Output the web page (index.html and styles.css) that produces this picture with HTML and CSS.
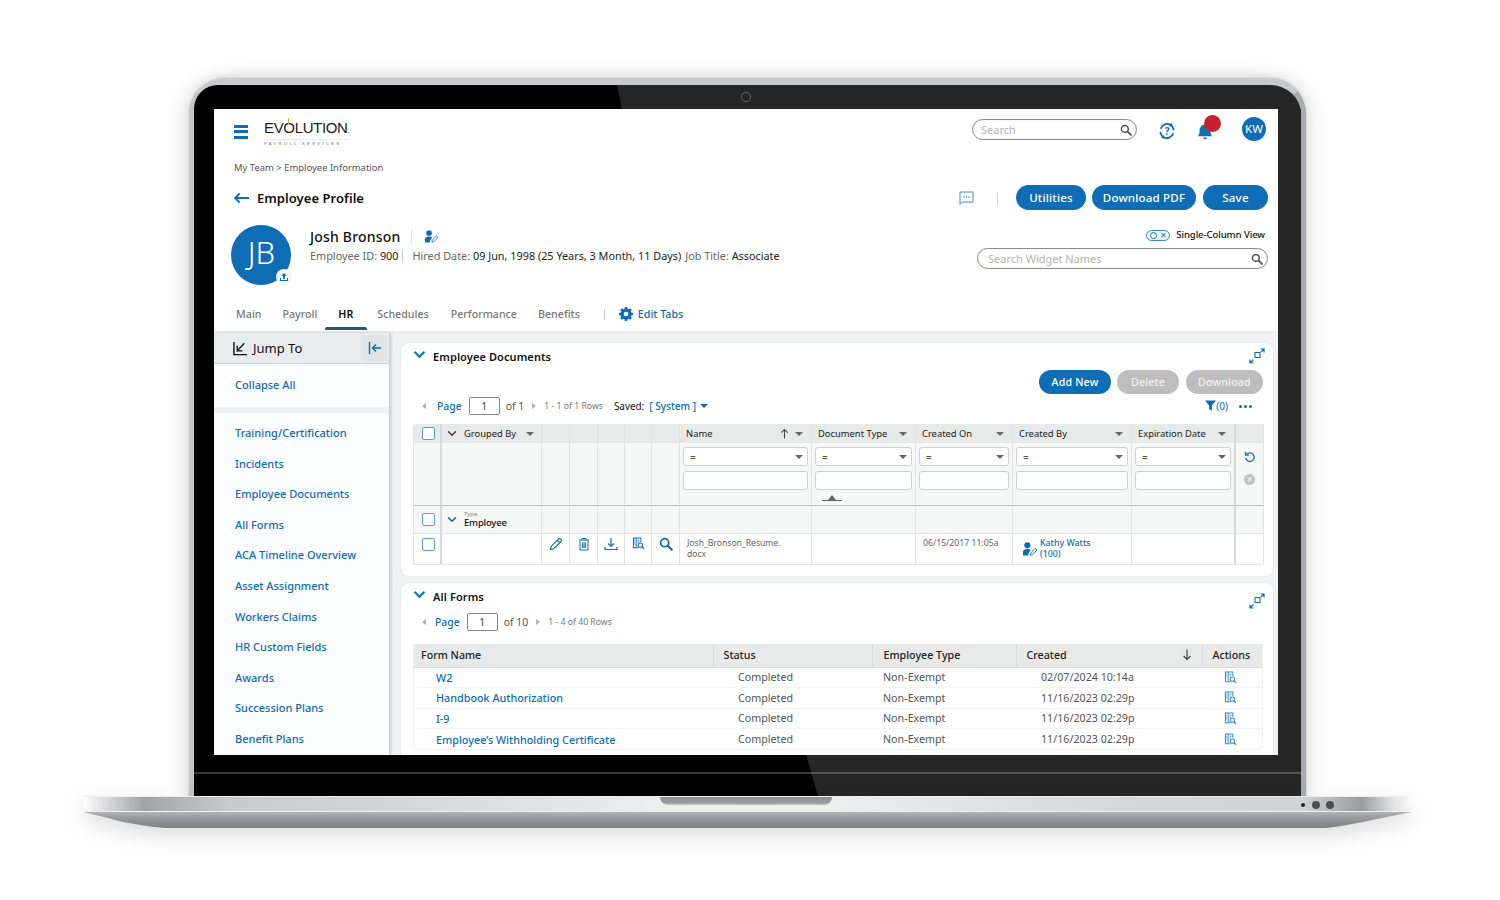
FILE: index.html
```html
<!DOCTYPE html>
<html lang="en">
<head>
<meta charset="utf-8">
<title>Employee Profile</title>
<link rel="stylesheet" href="styles.css">
</head>
<body>
<svg class="defs" width="0" height="0" aria-hidden="true">
  <symbol id="mag" viewBox="0 0 16 16"><circle cx="6.5" cy="6.5" r="4.6" fill="none" stroke="currentColor" stroke-width="2"/><path d="M10 10l4.6 4.6" stroke="currentColor" stroke-width="2.4" stroke-linecap="round"/></symbol>
  <symbol id="person" viewBox="0 0 18 16"><circle cx="6" cy="3.800" r="3.500" fill="currentColor"/><path d="M1 15.500V11.500C1 9.200 3 8 6 8c1.600 0 3 .4 3.800 1.100L7.500 12.500 7 15.500z" fill="currentColor"/><path d="M9.500 15l.5-2.500 5-5.300 2 1.900-5 5.300z" fill="none" stroke="currentColor" stroke-width="1"/></symbol>
  <symbol id="docs" viewBox="0 0 14 14"><path d="M7 11.500H1.500V1h8v4.500" fill="none" stroke="currentColor" stroke-width="1.100"/><path d="M4.500 1v10.500" stroke="currentColor" stroke-width="1"/><path d="M6 3.500h2M6 5.500h1.500M2.500 3.500h1M2.500 5.500h1M2.500 7.500h1" stroke="currentColor" stroke-width="1"/><circle cx="9" cy="8.800" r="2.300" fill="none" stroke="currentColor" stroke-width="1.100"/><path d="M10.700 10.500l2.200 2.200" stroke="currentColor" stroke-width="1.400"/></symbol>
  <symbol id="expand" viewBox="0 0 16 16"><rect x="6" y="4.500" width="5" height="5" fill="none" stroke="currentColor" stroke-width="1.100"/><path d="M11.500 1h3.500v3.500M15 1l-3 3M1 11.500V15h3.500M1 15l3.500-3.500" fill="none" stroke="currentColor" stroke-width="1.200"/></symbol>
  <symbol id="chev" viewBox="0 0 14 10"><path d="M1.500 2l5.500 5.500L12.500 2" fill="none" stroke="currentColor" stroke-width="2.200"/></symbol>
  <symbol id="arrow" viewBox="0 0 10 12"><path d="M5 11.500V1.500M1.500 5L5 1.500 8.500 5" fill="none" stroke="currentColor" stroke-width="1.200"/></symbol>
</svg>
<div class="laptop">
  <section class="lid">
    <div class="glare-top"></div>
    <div class="glare-bottom"></div>
    <div class="hinge-line"></div>
    <div class="camera"></div>
    <div class="screen">
      <header class="page-head">
        <div class="topbar">
          <div class="burger"><i></i><i></i><i></i></div>
          <div class="logo">
            <div class="logo-word">EV<span class="logo-o">O<b></b></span>LUTION<small>.</small></div>
            <div class="logo-sub">PAYROLL SERVICES</div>
          </div>
          <div class="search search-top"><span>Search</span><svg class="mag"><use href="#mag"/></svg></div>
          <svg class="help" viewBox="0 0 20 20"><path d="M3 7.500A7.800 7.800 0 0 1 14 3M17 12.500A7.800 7.800 0 0 1 6 17M2.600 11A7.800 7.800 0 0 0 4.500 15.500M17.400 9A7.800 7.800 0 0 0 15.500 4.500" fill="none" stroke="#0f6db5" stroke-width="2"/><circle cx="14.500" cy="3.500" r="1.800" fill="#0f6db5"/><circle cx="5.500" cy="16.500" r="1.800" fill="#0f6db5"/><text x="10" y="14" text-anchor="middle" class="help-q">?</text></svg>
          <div class="bell">
            <svg viewBox="0 0 16 18"><path d="M0.500 14.200c1.300-1 2-2.200 2-4.700C2.500 5.400 4.600 2.600 8 2.600s5.500 2.800 5.500 6.900c0 2.500.7 3.700 2 4.700z" fill="#0f6db5"/><path d="M6 15.500h4l-.7 1.500H6.700z" fill="#0f6db5"/></svg>
            <i></i>
          </div>
          <div class="kw">KW</div>
        </div>
        <div class="crumbs">My Team &gt; Employee Information</div>
        <div class="title-row">
          <svg class="back" viewBox="0 0 16 12"><path d="M6 1L1.200 6 6 11M1.500 6H16" fill="none" stroke="#0f6db5" stroke-width="2"/></svg>
          <h1>Employee Profile</h1>
          <svg class="chat" viewBox="0 0 15 15"><path d="M1 1h13v10H3.500L1 13.500z" fill="none" stroke="#3f86c6" stroke-width="1"/><path d="M4.500 6h1.200M7 6h1.200M9.500 6h1.200" stroke="#3f86c6" stroke-width="1.300"/></svg>
          <span class="vsep"></span>
          <button class="btn btn-utilities">Utilities</button>
          <button class="btn btn-pdf">Download PDF</button>
          <button class="btn btn-save">Save</button>
        </div>
        <div class="profile">
          <div class="avatar">JB
            <span class="upload"><svg viewBox="0 0 10 10"><path d="M5 1L2.500 3.800h1.600V7h1.800V3.800h1.600z M1 6v3h8V6H8v2H2V6z" fill="#0f6db5"/></svg></span>
          </div>
          <div class="who">
            <div class="name-row"><span class="name">Josh Bronson</span><span class="name-sep"></span><svg class="person-lg"><use href="#person"/></svg></div>
            <div class="meta"><span class="k">Employee ID:</span> 900<span class="meta-sep"></span><span class="k">Hired Date:</span> 09 Jun, 1998 (25 Years, 3 Month, 11 Days)<span class="gap"></span><span class="k">Job Title:</span> Associate</div>
          </div>
          <div class="view-tools">
            <div class="toggle-row">
              <span class="toggle"><i></i><b>×</b></span>
              <span>Single-Column View</span>
            </div>
            <div class="search search-widget"><span>Search Widget Names</span><svg class="mag"><use href="#mag"/></svg></div>
          </div>
        </div>
        <nav class="tabs">
          <a class="tab t-main">Main</a>
          <a class="tab t-pay">Payroll</a>
          <a class="tab tab-on t-hr">HR</a>
          <a class="tab t-sch">Schedules</a>
          <a class="tab t-perf">Performance</a>
          <a class="tab t-ben">Benefits</a>
          <span class="tab-sep"></span>
          <svg class="gear" viewBox="0 0 16 16"><path fill="#0f6db5" fill-rule="evenodd" d="M6.700 0h2.600l.4 2.100 1.300.6L12.800 1.500l1.800 1.800-1.200 1.800.6 1.300 2 .4v2.600l-2 .4-.6 1.300 1.200 1.800-1.800 1.800-1.800-1.200-1.300.6-.4 2.100H6.700l-.4-2.100-1.300-.6-1.800 1.200-1.800-1.800 1.200-1.800-.6-1.300-2-.4V6.800l2-.4.6-1.300-1.200-1.800 1.800-1.800L5 2.700l1.300-.6zM8 5.300a2.700 2.700 0 1 0 0 5.400 2.700 2.700 0 0 0 0-5.400z"/></svg>
          <a class="edit-tabs">Edit Tabs</a>
        </nav>
      </header>
      <div class="workspace">
        <aside class="side">
          <div class="jump">
            <svg class="jump-ic" viewBox="0 0 16 16"><path d="M1 1v13.500h14" fill="none" stroke="#111" stroke-width="1.500"/><path d="M12 2.500L5 10M4.500 5v5.500H10" fill="none" stroke="#111" stroke-width="1.500"/></svg>
            <span class="jump-t">Jump To</span>
            <span class="jump-btn"><svg viewBox="0 0 14 14"><path d="M1.500 1v12" stroke="#0f6db5" stroke-width="1.400"/><path d="M8 3.500L4.500 7 8 10.500M5 7h8" fill="none" stroke="#0f6db5" stroke-width="1.400"/></svg></span>
          </div>
          <a class="side-link collapse">Collapse All</a>
          <div class="side-rule"></div>
          <ul class="side-list">
            <li>Training/Certification</li>
            <li>Incidents</li>
            <li>Employee Documents</li>
            <li>All Forms</li>
            <li>ACA Timeline Overview</li>
            <li>Asset Assignment</li>
            <li>Workers Claims</li>
            <li>HR Custom Fields</li>
            <li>Awards</li>
            <li>Succession Plans</li>
            <li>Benefit Plans</li>
          </ul>
        </aside>
        <main class="content">
          <section class="card card-docs">
            <div class="card-head">
              <svg class="chev"><use href="#chev"/></svg>
              <h2>Employee Documents</h2>
              <svg class="expand"><use href="#expand"/></svg>
            </div>
            <div class="doc-actions">
              <button class="btn btn-sm btn-add">Add New</button>
              <button class="btn btn-sm btn-off btn-del">Delete</button>
              <button class="btn btn-sm btn-off btn-dl">Download</button>
            </div>
            <div class="pager">
              <i class="tri-l"></i><span class="pg">Page</span><span class="pg-box">1</span><span class="of">of 1</span><i class="tri-r"></i><span class="rows">1 - 1 of 1 Rows</span>
              <span class="saved">Saved:</span><span class="system">[ System ]</span><i class="caret-blue"></i>
              <span class="filters"><svg viewBox="0 0 12 12"><path d="M0 .5h12L7.500 6v5.500l-3-1.500V6z" fill="#0f6db5"/></svg>(0)</span>
              <span class="dots"><i></i><i></i><i></i></span>
            </div>
            <div class="grid">
              <div class="c hd thick"><span class="cb"></span></div>
              <div class="c hd g-head"><svg class="chev-sm"><use href="#chev"/></svg><span>Grouped By</span><i class="caret"></i></div>
              <div class="c hd"></div><div class="c hd"></div><div class="c hd"></div><div class="c hd"></div><div class="c hd"></div>
              <div class="c hd lab"><span>Name</span><svg class="arrow-up"><use href="#arrow"/></svg><i class="caret"></i></div>
              <div class="c hd lab"><span>Document Type</span><i class="caret"></i></div>
              <div class="c hd lab"><span>Created On</span><i class="caret"></i></div>
              <div class="c hd lab"><span>Created By</span><i class="caret"></i></div>
              <div class="c hd lab thick"><span>Expiration Date</span><i class="caret"></i></div>
              <div class="c hd end"></div>

              <div class="c fl thick"></div><div class="c fl"></div>
              <div class="c fl"></div><div class="c fl"></div><div class="c fl"></div><div class="c fl"></div><div class="c fl"></div>
              <div class="c fl f"><span class="sel">=<i class="caret"></i></span><span class="inp"></span></div>
              <div class="c fl f mark"><span class="sel">=<i class="caret"></i></span><span class="inp"></span><span class="splitter"></span></div>
              <div class="c fl f"><span class="sel">=<i class="caret"></i></span><span class="inp"></span></div>
              <div class="c fl f"><span class="sel">=<i class="caret"></i></span><span class="inp"></span></div>
              <div class="c fl f thick"><span class="sel">=<i class="caret"></i></span><span class="inp"></span></div>
              <div class="c fl end tools">
                <svg viewBox="0 0 12 12"><path d="M2.500 3.500A4.300 4.300 0 1 1 1.700 7" fill="none" stroke="#0f6db5" stroke-width="1.300"/><path d="M1.500 .8v3.400h3.400" fill="none" stroke="#0f6db5" stroke-width="1.300"/></svg>
                <span class="clear">×</span>
              </div>

              <div class="c gr thick cc"><span class="cb"></span></div>
              <div class="c gr group"><svg class="chev-sm blue"><use href="#chev"/></svg><div><small>Type</small><b>Employee</b></div></div>
              <div class="c gr"></div><div class="c gr"></div><div class="c gr"></div><div class="c gr"></div><div class="c gr"></div>
              <div class="c gr"></div><div class="c gr"></div><div class="c gr"></div><div class="c gr"></div><div class="c gr thick"></div><div class="c gr end"></div>

              <div class="c rw thick cc"><span class="cb"></span></div>
              <div class="c rw"></div>
              <div class="c rw act"><svg viewBox="0 0 14 14"><path d="M1.500 12.500l.8-3.300L9.500 2a1.400 1.400 0 0 1 2 0l.5.5a1.400 1.400 0 0 1 0 2l-7.200 7.200z M8.300 3.300l2.400 2.400" fill="none" stroke="#0f6db5" stroke-width="1.100"/></svg></div>
              <div class="c rw act"><svg viewBox="0 0 14 14"><path d="M2 3h10M5 3V1.500h4V3M3 3.500V13h8V3.500M5.500 5.500V11M7 5.500V11M8.500 5.500V11" fill="none" stroke="#0f6db5" stroke-width="1"/></svg></div>
              <div class="c rw act"><svg viewBox="0 0 14 14"><path d="M7 1v8M4 6.500L7 9.500l3-3M1 10v2.500h12V10" fill="none" stroke="#0f6db5" stroke-width="1.200"/></svg></div>
              <div class="c rw act"><svg class="doc-ic"><use href="#docs"/></svg></div>
              <div class="c rw act"><svg class="doc-mag"><use href="#mag"/></svg></div>
              <div class="c rw cell-name">Josh_Bronson_Resume.<br>docx</div>
              <div class="c rw"></div>
              <div class="c rw cell-date">06/15/2017 11:05a</div>
              <div class="c rw cell-by"><svg class="person-sm"><use href="#person"/></svg><a>Kathy Watts<br>(100)</a></div>
              <div class="c rw thick"></div>
              <div class="c rw end"></div>
            </div>
          </section>
          <section class="card card-forms">
            <div class="card-head">
              <svg class="chev"><use href="#chev"/></svg>
              <h2>All Forms</h2>
              <svg class="expand"><use href="#expand"/></svg>
            </div>
            <div class="pager pager-forms">
              <i class="tri-l"></i><span class="pg">Page</span><span class="pg-box">1</span><span class="of">of 10</span><i class="tri-r"></i><span class="rows">1 - 4 of 40 Rows</span>
            </div>
            <div class="forms-wrap">
            <table class="forms">
              <thead>
                <tr><th class="col-a">Form Name</th><th class="col-b">Status</th><th class="col-c">Employee Type</th><th class="col-d"><div class="th-sort">Created<svg class="arrow-down"><use href="#arrow"/></svg></div></th><th class="col-e">Actions</th></tr>
              </thead>
              <tbody>
                <tr><td class="form-link">W2</td><td>Completed</td><td>Non-Exempt</td><td>02/07/2024 10:14a</td><td class="form-act"><svg><use href="#docs"/></svg></td></tr>
                <tr><td class="form-link">Handbook Authorization</td><td>Completed</td><td>Non-Exempt</td><td>11/16/2023 02:29p</td><td class="form-act"><svg><use href="#docs"/></svg></td></tr>
                <tr><td class="form-link">I-9</td><td>Completed</td><td>Non-Exempt</td><td>11/16/2023 02:29p</td><td class="form-act"><svg><use href="#docs"/></svg></td></tr>
                <tr><td class="form-link">Employee’s Withholding Certificate</td><td>Completed</td><td>Non-Exempt</td><td>11/16/2023 02:29p</td><td class="form-act"><svg><use href="#docs"/></svg></td></tr>
              </tbody>
            </table>
            </div>
          </section>
        </main>
      </div>
    </div>
  </section>
  <section class="base">
    <div class="plate">
      <span class="notch"></span>
      <span class="ports"><i></i><i></i><i></i></span>
    </div>
    <div class="under"></div>
  </section>
</div>
</body>
</html>
```

FILE: styles.css
```css
* { box-sizing: border-box; }
html, body { margin: 0; padding: 0; }
body { width: 1500px; height: 900px; overflow: hidden; background: #fff; font-family: "Noto Sans", "Open Sans", sans-serif; color: #222; font-size: 11px; }
.defs { position: absolute; }
button { font-family: inherit; border: 0; padding: 0; }
ul { list-style: none; margin: 0; padding: 0; }
h1, h2 { margin: 0; }

/* device */
.laptop { width: 1500px; padding-top: 78px; display: flex; flex-direction: column; align-items: center; }
.lid { position: relative; width: 1117px; height: 718px; margin-left: -5px; background: #262626; border-style: solid; border-width: 7px 5px 0; border-color: #c9cacc #a9abae #a9abae #c4c5c7; border-radius: 36px 36px 0 0; padding: 24px 23px 0 20px; box-shadow: 0 0 1px 1px #d9d9d9, -6px 0 18px rgba(0,0,0,.10), 6px 0 18px rgba(0,0,0,.10); }
.glare-top { position: absolute; left: 0; top: 0; width: 428px; height: 24px; background: #000; border-radius: 31px 0 0 0; clip-path: polygon(0 0, 423px 0, 428px 100%, 0 100%); }
.lid::before { content: ""; position: absolute; left: 0; top: 24px; bottom: 0; width: 20px; background: #000; }
.lid::after { content: ""; position: absolute; left: 1084px; top: 24px; bottom: 0; width: 23px; background: #262626; }
.glare-bottom { position: absolute; left: 0; bottom: 0; width: 624px; height: 41px; background: #000; clip-path: polygon(0 0, 612px 0, 624px 100%, 0 100%); }
.hinge-line { position: absolute; left: 0; right: 0; bottom: 22px; height: 2px; background: rgba(255,255,255,.22); z-index: 1; }
.camera { position: absolute; left: 547px; top: 7px; width: 10px; height: 10px; border-radius: 50%; background: #222; border: 1.500px solid #666; }
.screen { position: relative; z-index: 2; width: 1064px; height: 646px; background: #fff; display: flex; flex-direction: column; overflow: hidden; }

.base { width: 1329px; margin-left: -5px; display: flex; flex-direction: column; align-items: flex-start; filter: drop-shadow(0 8px 10px rgba(0,0,0,.13)); }
.plate { position: relative; width: 1324px; height: 16px; margin-left: 1px; background: linear-gradient(90deg, #fff 0, #e8e8e8 1%, #a2a3a5 4.500%, #c9cacc 11%, #d6d7d9 25%, #eceded 43%, #eeefef 55%, #d6d7d9 78%, #d2d3d5 92%, #9a9b9d 96.500%, #e6e6e6 99%, #f4f4f4 100%); border-top: 1px solid #eee; border-bottom: 1px solid #eee; }
.notch { position: absolute; left: 576px; top: 0; width: 172px; height: 8px; background: linear-gradient(#8e8f91, #9a9b9d 70%, #c6c7c9); border-radius: 0 0 12px 12px; }
.ports { position: absolute; left: 1217px; top: 3px; display: flex; align-items: center; gap: 6px; height: 9px; }
.ports i { width: 8px; height: 8px; border-radius: 50%; background: #4c4d4f; }
.ports i:first-child { width: 4px; height: 4px; background: #222; margin-right: 1px; }
.under { width: 1329px; height: 16px; background: linear-gradient(#b3b4b6, #97989b 40%, #808184); clip-path: polygon(0 0, 100% 0, 98% 33%, 96.500% 60%, 94.500% 90%, 93.500% 100%, 6.200% 100%, 5% 90%, 3% 62%, 1.500% 30%); }

/* header */
.page-head { height: 222px; flex: none; padding: 0 10px 0 20px; display: flex; flex-direction: column; }
.topbar { height: 41px; display: flex; align-items: center; margin-right: 2px; }
.burger { width: 14px; margin-top: 4px; display: flex; flex-direction: column; gap: 2.500px; }
.burger i { height: 3px; background: #0f6db5; }
.logo { margin-left: 16px; width: 86px; margin-top: 8px; }
.logo-word { font: 400 15px/14px "Liberation Sans", sans-serif; letter-spacing: -0.35px; color: #1c1c1c; white-space: nowrap; }
.logo-word small { font-size: 8px; }
.logo-o { position: relative; }
.logo-o b { position: absolute; left: 5px; top: -1px; width: 1px; height: 6px; background: #a5c531; }
.logo-sub { font: 4px/5px "Liberation Sans", sans-serif; letter-spacing: 2.400px; color: #666; margin-top: 1px; border-top: 1px solid #e8eed0; padding-top: 1px; white-space: nowrap; }
.search { display: flex; align-items: center; justify-content: space-between; border: 1px solid #8d8d8d; border-radius: 11px; background: #fff; color: #b3b3b3; font-size: 11px; padding: 0 4px 0 8px; box-shadow: inset 0 0 1px #bbb; }
.search-top { margin-left: auto; width: 165px; height: 21px; }
.mag { width: 12px; height: 12px; color: #555; }
.help { width: 18px; height: 18px; margin-left: 21px; margin-top: 3px; }
.help-q { font: 700 11px "Noto Sans", sans-serif; fill: #0f6db5; }
.bell { position: relative; width: 16px; height: 18px; margin-left: 21px; margin-top: 3px; }
.bell svg { display: block; width: 16px; height: 18px; }
.bell i { position: absolute; left: 7px; top: -7px; width: 17px; height: 17px; border-radius: 50%; background: #c8202a; }
.kw { width: 24px; height: 24px; border-radius: 50%; margin-left: 29px; margin-top: -1px; background: #0f6db5; color: #fff; font-size: 11.500px; line-height: 24px; text-align: center; }
.crumbs { margin-top: 11px; font-size: 9.450px; line-height: 14px; color: #555; }
.title-row { display: flex; align-items: center; height: 26px; margin-top: 10px; }
.back { width: 15px; height: 12px; }
h1 { margin-left: 8px; font-size: 13px; font-weight: 600; letter-spacing: .05px; color: #111; }
.chat { width: 15px; height: 15px; margin-left: auto; }
.vsep { width: 1px; height: 13px; background: #d8d8d8; margin: 0 18px 0 23px; }
.btn { display: block; background: #0f6db5; color: #fff; border-radius: 13px; font-size: 11.500px; font-weight: 500; letter-spacing: .2px; height: 25px; }
.title-row .btn { margin-top: -2px; }
.btn-utilities { width: 70px; }
.btn-pdf { width: 104px; margin-left: 6px; }
.btn-save { width: 65px; margin-left: 7px; }
.profile { display: flex; align-items: flex-start; height: 59px; margin-top: 14px; margin-left: -3px; }
.avatar { position: relative; width: 60px; height: 60px; flex: none; border-radius: 50%; background: #0f6db5; color: #fff; font-size: 31px; font-weight: 300; line-height: 55px; text-align: center; padding-left: 1px; }
.upload { position: absolute; right: -1px; bottom: 0; width: 16px; height: 16px; border-radius: 50%; background: #f2f2f2; display: flex; align-items: center; justify-content: center; }
.upload svg { width: 10px; height: 10px; }
.who { margin-left: 19px; margin-top: 1px; }
.name-row { display: flex; align-items: center; height: 20px; }
.name { font-size: 14px; font-weight: 500; letter-spacing: .2px; color: #111; }
.name-sep { width: 1px; height: 13px; background: #ddd; margin: 0 12px 0 10px; }
.person-lg { width: 15px; height: 13px; color: #0f6db5; }
.meta { margin-top: 2px; font-size: 10.850px; line-height: 16px; color: #222; white-space: nowrap; }
.meta .k { color: #666; }
.meta-sep { display: inline-block; width: 1px; height: 12px; background: #ccc; margin: 0 10px 0 3px; vertical-align: -2px; }
.gap { display: inline-block; width: 4px; }
.view-tools { margin-left: auto; display: flex; flex-direction: column; align-items: flex-end; }
.toggle-row { display: flex; align-items: center; margin-top: 2px; margin-right: 3px; font-size: 9.580px; font-weight: 500; letter-spacing: -.1px; line-height: 16px; color: #111; }
.toggle { position: relative; display: block; width: 24px; height: 11px; margin-right: 6px; border: 1px solid #3f86c6; border-radius: 6px; background: #eaf2fa; }
.toggle i { position: absolute; left: 3px; top: 1px; width: 7px; height: 7px; border-radius: 50%; border: 1px solid #0f6db5; background: #fff; }
.toggle b { position: absolute; right: 3px; top: -3px; font-size: 10px; line-height: 14px; font-weight: 400; color: #0f6db5; }
.search-widget { width: 291px; height: 21px; margin-top: 5px; padding-left: 10px; color: #b3b3b3; }
.tabs { position: relative; display: flex; align-items: center; height: 20px; margin-top: 20px; margin-left: 2px; font-size: 10.680px; font-weight: 500; color: #777; }
.tab { display: block; position: relative; }
.t-pay { margin-left: 21px; }
.t-hr { margin-left: 21px; color: #111; font-weight: 600; }
.t-sch { margin-left: 24px; }
.t-perf { margin-left: 22px; }
.t-ben { margin-left: 21px; }
.tab-on::after { content: ""; position: absolute; left: -13px; right: -14px; bottom: -9px; height: 3px; background: #2a5a6d; border-radius: 2px 2px 0 0; }
.tab-sep { width: 1px; height: 11px; background: #ccc; margin: 0 14px 0 24px; }
.gear { width: 14px; height: 14px; }
.edit-tabs { margin-left: 5px; color: #0f6db5; }

/* workspace */
.workspace { flex: 1; display: flex; min-height: 0; background: #f1f2f3; border-top: 2px solid #eceded; }
.side { width: 175px; flex: none; background: #fbfcfe; box-shadow: 2px 0 3px rgba(0,0,0,.18); position: relative; z-index: 1; }
.jump { display: flex; align-items: center; height: 31px; background: #e9ecec; border-bottom: 1px solid #d0d2d2; }
.jump-ic { width: 15px; height: 15px; margin-left: 19px; }
.jump-t { margin-left: 5px; font-size: 13px; line-height: 16px; color: #111; }
.jump-btn { margin-left: auto; margin-right: 2px; width: 25px; height: 26px; background: #dfe4e6; display: flex; align-items: center; justify-content: center; }
.jump-btn svg { width: 14px; height: 14px; }
.side-link, .side-list li { color: #0f6db5; font-size: 11px; font-weight: 500; line-height: 16px; padding-left: 21px; }
.collapse { display: block; margin-top: 13px; }
.side-rule { height: 6px; margin-top: 14px; background: #f1f2f3; }
.side-list { margin-top: 12px; }
.side-list li { height: 30.600px; line-height: 16px; padding-top: 0; }
.content { flex: 1; min-width: 0; padding: 10px 5px 0 12px; overflow: hidden; display: flex; flex-direction: column; gap: 7px; }
.card { flex: none; background: #fff; border-radius: 8px; box-shadow: 0 0 2px rgba(0,0,0,.10); padding: 0 10px 0 12px; }
.card-docs { height: 233px; }
.card-forms { height: 200px; }
.card-head { position: relative; display: flex; align-items: center; height: 25px; padding-top: 1px; }
.chev { width: 13px; height: 9px; color: #0f6db5; margin-top: -3px; }
h2 { margin-left: 7px; font-size: 11px; font-weight: 600; letter-spacing: .1px; color: #111; }
.expand { width: 16px; height: 16px; color: #0f6db5; margin-left: auto; margin-right: -2px; margin-top: 0; }
.card-forms .expand { margin-top: 10px; }
.doc-actions { display: flex; justify-content: flex-end; height: 24px; margin-top: 2px; }
.btn-sm { font-size: 10.600px; height: 24px; border-radius: 12px; }
.btn-add { width: 72px; }
.btn-off { background: #bdbdbd; color: #f2f2f2; }
.btn-del { width: 62px; margin-left: 6px; }
.btn-dl { width: 77px; margin-left: 7px; }
.pager { display: flex; align-items: center; height: 18px; margin-top: 3px; padding-left: 9px; font-size: 11px; color: #555; }
.tri-l, .tri-r { width: 0; height: 0; border-top: 3px solid transparent; border-bottom: 3px solid transparent; }
.tri-l { border-right: 4px solid #b3b3b3; }
.tri-r { border-left: 4px solid #b3b3b3; margin-left: 8px; }
.pg { margin-left: 11px; color: #0f6db5; font-weight: 500; font-size: 10.400px; }
.pg-box { width: 31px; height: 18px; margin-left: 7px; border: 1px solid #888; border-radius: 2px; text-align: center; line-height: 16px; color: #444; font-size: 10.500px; }
.of { margin-left: 6px; font-size: 10.400px; }
.rows { margin-left: 8px; font-size: 8.700px; color: #777; }
.saved { margin-left: 11px; color: #111; font-size: 9.900px; }
.system { margin-left: 5px; color: #0f6db5; font-size: 10.100px; font-weight: 500; }
.caret-blue { width: 0; height: 0; margin-left: 4px; border-left: 4px solid transparent; border-right: 4px solid transparent; border-top: 4px solid #0f6db5; }
.filters { margin-left: auto; display: flex; align-items: center; color: #0f6db5; font-size: 10px; }
.filters svg { width: 11px; height: 11px; margin-top: -2px; }
.dots { display: flex; gap: 2px; margin-left: 11px; margin-right: 11px; }
.dots i { width: 3px; height: 3px; border-radius: 50%; background: #0f6db5; }

/* documents grid */
.grid { display: grid; grid-template-columns: 28px 100px 28px 28px 27px 27px 28px 132px 104px 97px 119px 104px 28px; grid-template-rows: 19px 63px 28px 30px; margin-top: 9px; border-bottom: 1px solid #e3e4e4; border-left: 1px solid #e3e4e4; }
.c { border-right: 1px solid #e1e2e2; min-width: 0; }
.c.thick { border-right: 2px solid #d8d9d9; }
.hd { background: #e8e9e9; display: flex; align-items: center; font-size: 9.400px; color: #222; }
.hd:first-child { border-top-left-radius: 3px; justify-content: center; }
.end { border-right: 1px solid #e1e2e2; }
.g-head svg { margin-left: 5px; }
.g-head span { margin-left: 7px; }
.g-head .caret { margin-left: 10px; }
.lab { padding: 0 8px 0 6px; }
.lab span { white-space: nowrap; margin-right: auto; }
.arrow-up { width: 9px; height: 11px; margin-right: 6px; color: #444; flex: none; }
.arrow-down { width: 10px; height: 12px; margin-left: auto; margin-right: 10px; color: #444; transform: rotate(180deg); }
.th-sort { display: flex; align-items: center; }
.caret { display: block; width: 0; height: 0; border-left: 4px solid transparent; border-right: 4px solid transparent; border-top: 4px solid #666; }
.chev-sm { width: 10px; height: 7px; color: #444; flex: none; }
.chev-sm.blue { color: #0f6db5; margin-left: 5px; margin-right: 7px; margin-top: -1px; }
.fl { background: #f6f7f7; border-bottom: 1px solid #bfc0c0; }
.f { padding: 4px 3px 0 3px; position: relative; }
.sel, .inp { display: block; height: 19px; background: #fff; border: 1px solid #cfd0d0; border-radius: 3px; }
.sel { display: flex; align-items: center; justify-content: space-between; padding: 0 4px 0 6px; font-size: 10px; color: #555; line-height: 14px; }
.inp { margin-top: 5px; }
.mark .splitter { position: absolute; left: 10px; bottom: 4px; width: 20px; height: 1px; background: #666; }
.mark .splitter::after { content: ""; position: absolute; left: 6px; top: -5px; border-left: 4px solid transparent; border-right: 4px solid transparent; border-bottom: 5px solid #666; }
.tools { display: flex; flex-direction: column; align-items: center; padding-top: 8px; gap: 11px; }
.tools svg { width: 12px; height: 12px; }
.clear { width: 11px; height: 11px; border-radius: 50%; background: #c2c2c2; color: #f7f7f7; font-size: 10px; line-height: 10px; text-align: center; }
.gr { background: #f6f7f7; border-bottom: 1px solid #e1e2e2; }
.cc { display: flex; justify-content: center; align-items: center; }
.rw.cc { align-items: flex-start; padding-top: 4px; }
.cb { display: block; width: 13px; height: 13px; margin-left: 2px; border: 1.500px solid #5c9bd6; border-radius: 2px; background: #fff; }
.group { display: flex; align-items: center; }
.group div { display: flex; flex-direction: column; margin-top: -2px; }
.group small { font-size: 6px; line-height: 6px; color: #888; margin-top: 2px; }
.group b { font-size: 9.500px; line-height: 12px; font-weight: 500; color: #111; letter-spacing: -.2px; }
.rw { background: #fff; }
.act { display: flex; justify-content: center; padding-top: 3px; color: #0f6db5; }
.act svg { width: 14px; height: 14px; }
.act .doc-ic { width: 13px; height: 13px; color: #0f6db5; }
.cell-name { padding: 4px 0 0 7px; font-size: 8.600px; line-height: 11px; color: #666; }
.cell-date { padding: 3px 0 0 7px; font-size: 8.700px; line-height: 13px; color: #666; }
.cell-by { display: flex; padding: 4px 0 0 9px; font-size: 8.800px; line-height: 11px; color: #0f6db5; font-weight: 500; }
.person-sm { width: 16px; height: 14px; margin-top: 4px; margin-right: 2px; flex: none; }

/* forms table */
.pager-forms { margin-top: 4px; height: 19px; padding-top: 1px; }
.pager-forms .pg { margin-left: 9px; }
.forms-wrap { width: 850px; margin-top: 13px; border: 1px solid #f0f1f1; border-top: 0; border-radius: 0 0 6px 6px; }
.forms { width: 100%; border-collapse: collapse; table-layout: fixed; font-size: 10.700px; }
.forms th { height: 23px; padding: 0; background: #e8e9e9; font-weight: 500; text-align: left; color: #222; border-bottom: 1px solid #d9dada; border-right: 1px solid #d9dada; }
.forms th:last-child { border-right: 0; }
.col-a { width: 299px; padding-left: 7px !important; }
.col-b { width: 159px; padding-left: 10px !important; }
.col-c { width: 144px; padding-left: 11px !important; }
.col-d { width: 186px; padding-left: 10px !important; }
.col-e { padding-left: 10px !important; }
.forms td { height: 20.600px; padding: 0 0 0 25px; color: #555; border-bottom: 1px solid #f3f4f4; white-space: nowrap; }
.forms tr:last-child td { border-bottom: 0; }
.forms td:nth-child(3) { padding-left: 11px; }
.forms td:nth-child(4) { padding-left: 25px; }
.forms td.form-link { padding-left: 22px; color: #0f6db5; font-weight: 500; font-size: 10.800px; }
.forms td.form-act { padding-left: 22px; color: #3f86c6; }
.form-act svg { display: block; width: 13px; height: 13px; }
```
